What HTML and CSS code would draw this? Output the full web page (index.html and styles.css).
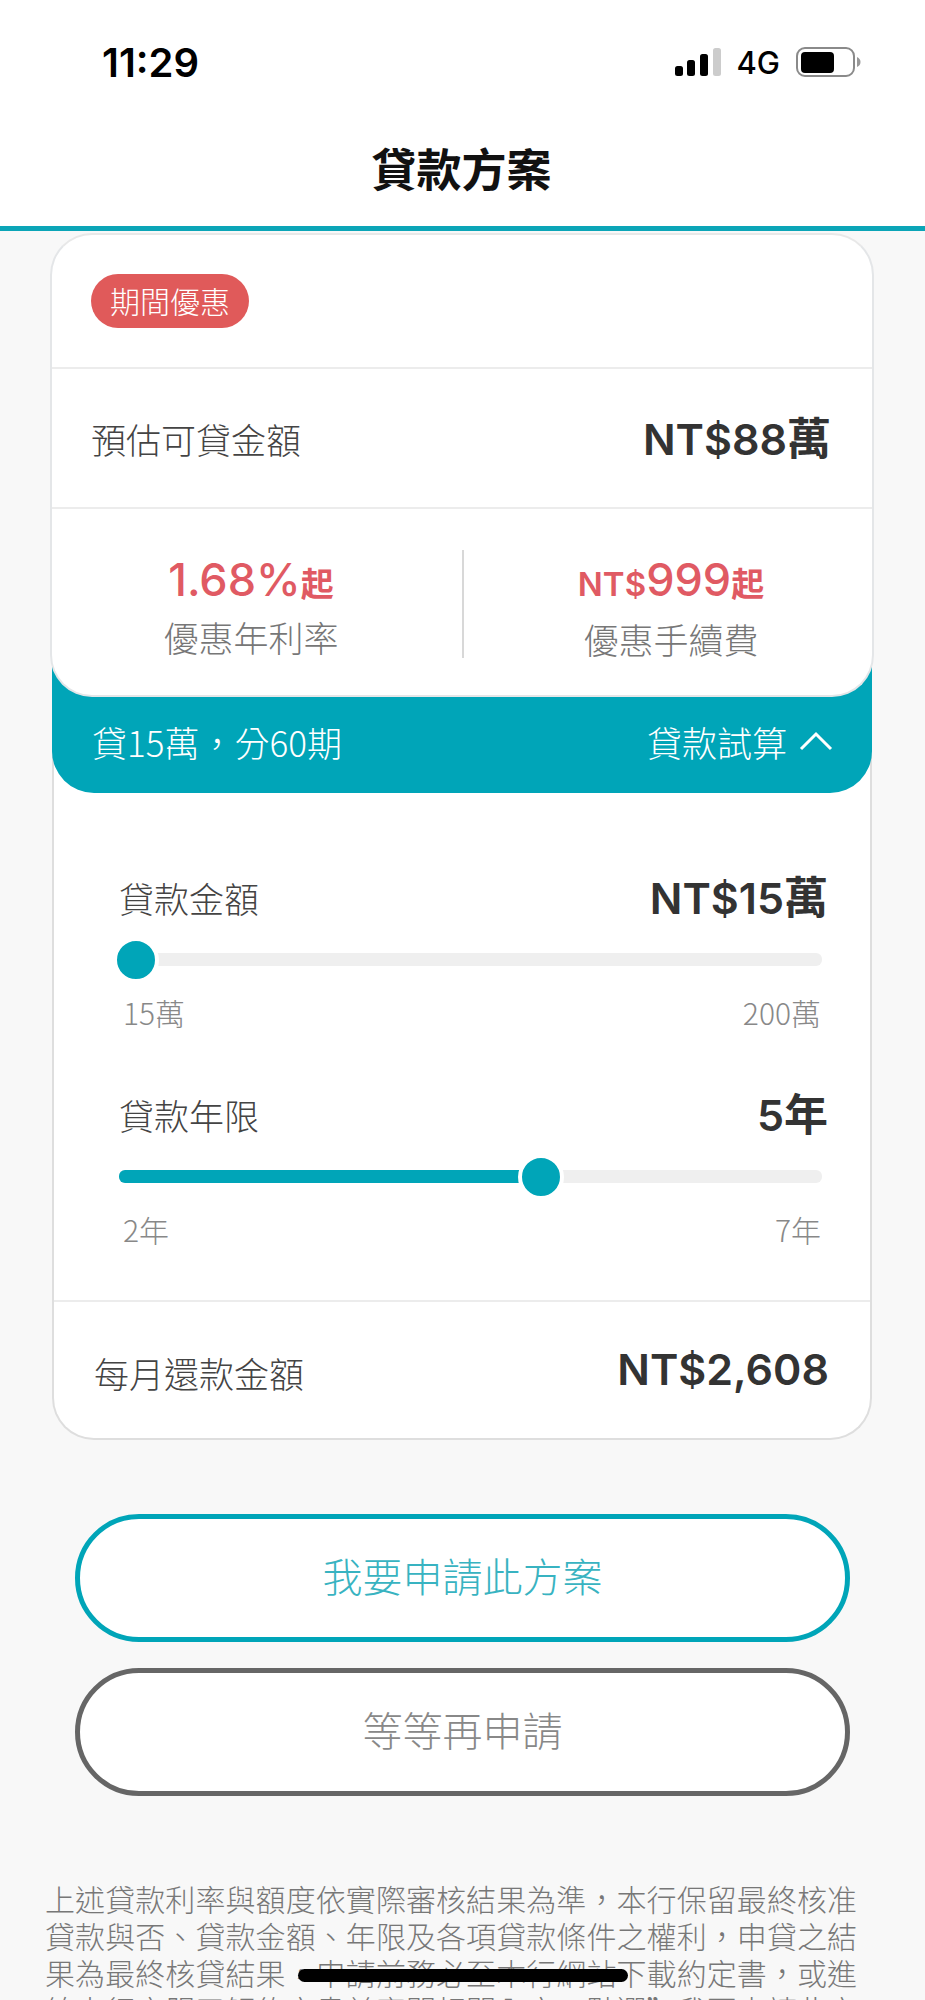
FILE: index.html
```html
<!DOCTYPE html>
<html lang="zh-Hant">
  <head>
    <meta charset="UTF-8">
    <title>貸款方案</title>
    <link rel="stylesheet" href="styles.css">
  </head>
  <body>
    <div class="screen">
      <header class="top">
        <div class="status">
          <span class="time">11:29</span>
          <div class="status-right">
            <svg class="signal" width="46" height="28" viewBox="0 0 46 28">
              <rect x="0" y="18" width="8" height="10" rx="2.5" fill="#000"/>
              <rect x="12" y="12" width="8" height="16" rx="2.5" fill="#000"/>
              <rect x="25" y="6" width="8" height="22" rx="2.5" fill="#000"/>
              <rect x="38" y="0" width="8" height="28" rx="2.5" fill="#ccc"/>
            </svg>
            <span class="net">4G</span>
            <svg class="battery" width="65" height="30" viewBox="0 0 65 30">
              <rect x="1" y="1" width="57" height="28" rx="8" fill="#fff" stroke="#8a8a8a" stroke-width="2"/>
              <rect x="5" y="5" width="33" height="21" rx="4" fill="#000"/>
              <path d="M61 10 C63.5 11 64.5 13 64.5 15 C64.5 17 63.5 19 61 20 Z" fill="#999"/>
            </svg>
          </div>
        </div>
        <h1 class="title">貸款方案</h1>
      </header>

      <main class="content">
        <section class="plan">
          <div class="plan-tag">
            <span class="badge">期間優惠</span>
          </div>
          <div class="row row-amount">
            <span class="row-label">預估可貸金額</span>
            <span class="amount">NT$88<span class="cjk">萬</span></span>
          </div>
          <div class="stats">
            <div class="stat stat-rate">
              <div class="stat-value">1.68%<span class="stat-suffix">起</span></div>
              <div class="stat-label">優惠年利率</div>
            </div>
            <div class="stat stat-fee">
              <div class="stat-value"><span class="stat-prefix">NT$</span>999<span class="stat-suffix">起</span></div>
              <div class="stat-label">優惠手續費</div>
            </div>
          </div>
        </section>

        <section class="calc">
          <div class="calc-bar">
            <span>貸15萬，分60期</span>
            <span class="calc-toggle">貸款試算
              <svg width="34" height="20" viewBox="0 0 34 20">
                <path d="M2 18 L17 3 L32 18" fill="none" stroke="#fff" stroke-width="3"/>
              </svg>
            </span>
          </div>

          <div class="sliders">
            <div class="slider-block">
              <div class="slider-head">
                <span class="row-label">貸款金額</span>
                <span class="amount">NT$15<span class="cjk">萬</span></span>
              </div>
              <div class="track">
                <span class="thumb thumb-start"></span>
              </div>
              <div class="slider-range">
                <span>15萬</span>
                <span>200萬</span>
              </div>
            </div>
            <div class="slider-block">
              <div class="slider-head">
                <span class="row-label">貸款年限</span>
                <span class="amount">5<span class="cjk">年</span></span>
              </div>
              <div class="track">
                <span class="track-fill" style="width: 60%"></span>
                <span class="thumb" style="left: 60%"></span>
              </div>
              <div class="slider-range">
                <span>2年</span>
                <span>7年</span>
              </div>
            </div>
          </div>

          <div class="row row-monthly">
            <span class="row-label">每月還款金額</span>
            <span class="amount">NT$2,608</span>
          </div>
        </section>

        <div class="actions">
          <button class="btn btn-apply">我要申請此方案</button>
          <button class="btn btn-later">等等再申請</button>
        </div>

        <p class="note">上述貸款利率與額度依實際審核結果為準，本行保留最終核准貸款與否、貸款金額、年限及各項貸款條件之權利，申貸之結果為最終核貸結果，申請前務必至本行網站下載約定書，或進線本行客服了解約定書並實閱相關內容，點選”我要申請此方案”</p>
      </main>

      <div class="home-bar"></div>
    </div>
  </body>
</html>
```

FILE: styles.css
```css
* {
  box-sizing: border-box;
}

body {
  margin: 0;
  background-color: #f8f8f8;
  font-family: "Noto Sans CJK TC", "Noto Sans", sans-serif;
}

.screen {
  position: relative;
  height: 2000px;
  overflow: hidden;
}

/* header */
.top {
  height: 231px;
  background-color: #fff;
  border-bottom: 5px solid #0ba5b7;
}

.status {
  display: flex;
  justify-content: space-between;
  align-items: center;
  height: 124px;
  padding: 0 64px 0 102px;
}

.time {
  font-family: Inter, sans-serif;
  font-size: 40px;
  font-weight: 600;
  color: #000;
}

.status-right {
  display: flex;
  align-items: center;
}

.net {
  margin: 0 16px 0 15px;
  font-family: Inter, sans-serif;
  font-size: 31px;
  font-weight: 500;
  color: #000;
}

.title {
  margin: 0;
  padding: 0 2px 4px 0;
  text-align: center;
  font-size: 45px;
  line-height: 88px;
  font-weight: 700;
  color: #111;
}

/* cards */
.content {
  padding: 2px 51px 0 50px;
}

.plan {
  position: relative;
  z-index: 1;
  background-color: #fff;
  border: 2px solid #e4e6e8;
  border-top-color: #e8e8e8;
  border-radius: 42px;
}

.plan-tag {
  display: flex;
  align-items: flex-start;
  height: 134px;
  padding: 39px 0 0 39px;
  border-bottom: 2px solid #ececec;
}

.badge {
  height: 54px;
  padding: 0 19px;
  background-color: #e05a5a;
  border-radius: 27px;
  color: #fff;
  font-size: 30px;
  font-weight: 300;
  line-height: 52px;
}

.row {
  display: flex;
  justify-content: space-between;
  align-items: center;
}

.row-amount {
  height: 140px;
  padding: 0 41px 0 39px;
  border-bottom: 2px solid #ececec;
}

.row-label {
  font-size: 35px;
  font-weight: 300;
  color: #444;
}

.amount {
  padding-bottom: 5px;
  font-family: Inter, "Noto Sans CJK TC", sans-serif;
  font-size: 43px;
  font-weight: 600;
  color: #333;
}

.cjk {
  font-family: "Noto Sans CJK TC", sans-serif;
  font-size: 44px;
  font-weight: 700;
}

.stats {
  display: flex;
  padding: 41px 0 37px;
}

.stat {
  flex: 0 0 50%;
  height: 108px;
  text-align: center;
}

.stat-rate {
  padding-right: 12px;
}

.stat-fee {
  padding-left: 6px;
  border-left: 2px solid #d8d8d8;
}

.stat-value {
  font-family: Inter, "Noto Sans CJK TC", sans-serif;
  font-size: 45px;
  font-weight: 500;
  line-height: 60px;
  color: #e05a63;
}

.stat-suffix {
  font-family: "Noto Sans CJK TC", sans-serif;
  font-size: 33px;
  font-weight: 700;
}

.stat-prefix {
  font-size: 33px;
  font-weight: 600;
}

.stat-label {
  font-size: 35px;
  font-weight: 300;
  line-height: 50px;
  color: #777;
}

.calc {
  margin: -30px 2px 0;
  background-color: #fff;
  border: 2px solid #dedede;
  border-top: 0;
  border-radius: 0 0 42px 42px;
}

.calc-bar {
  display: flex;
  justify-content: space-between;
  align-items: center;
  height: 126px;
  margin: 0 -2px;
  padding: 22px 38px 0 40px;
  background-color: #00a5b8;
  border-radius: 0 0 42px 42px;
  color: #fff;
  font-size: 35px;
  font-weight: 300;
}

.calc-toggle {
  display: flex;
  align-items: center;
  gap: 12px;
  margin-right: 1px;
}

/* sliders */
.sliders {
  padding: 73px 48px 0 65px;
}

.slider-block {
  height: 217px;
}

.slider-head {
  display: flex;
  justify-content: space-between;
  align-items: center;
  height: 62px;
  margin: 0 -6px 25px 0;
}

.track {
  position: relative;
  height: 13px;
  background-color: #efefef;
  border-radius: 6px;
}

.track-fill {
  position: absolute;
  left: 0;
  top: 0;
  bottom: 0;
  background-color: #00a5b8;
  border-radius: 6px 0 0 6px;
}

.thumb {
  position: absolute;
  top: 50%;
  width: 46px;
  height: 46px;
  margin: -23px 0 0 -23px;
  background-color: #00a5b8;
  border: 4px solid #fff;
  border-radius: 50%;
}

.thumb-start {
  left: 17px;
}

.slider-range {
  display: flex;
  justify-content: space-between;
  margin-top: 26px;
  padding: 0 1px 0 4px;
  font-size: 30px;
  font-weight: 300;
  line-height: 40px;
  color: #888;
}

.row-monthly {
  height: 138px;
  padding: 0 41px 0 40px;
  border-top: 2px solid #ececec;
}

.row-monthly .row-label {
  padding-top: 4px;
}

.row-monthly .amount {
  padding-bottom: 2px;
}

/* buttons */
.actions {
  display: flex;
  flex-direction: column;
  gap: 26px;
  margin: 74px 24px 0 25px;
}

.btn {
  height: 128px;
  padding: 0 0 6px;
  background-color: #fff;
  border-radius: 64px;
  border-width: 5px;
  border-style: solid;
  font-family: inherit;
  font-size: 40px;
  font-weight: 300;
}

.btn-apply {
  border-color: #00a5b8;
  color: #38b3c1;
}

.btn-later {
  border-color: #666;
  color: #888;
}

.note {
  margin: 84px -6px 0 -5px;
  font-size: 30px;
  font-weight: 300;
  line-height: 37px;
  letter-spacing: 0.08px;
  color: #777;
}

.home-bar {
  position: absolute;
  left: 298px;
  top: 1969px;
  width: 330px;
  height: 13px;
  background-color: #000;
  border-radius: 7px;
}
```
